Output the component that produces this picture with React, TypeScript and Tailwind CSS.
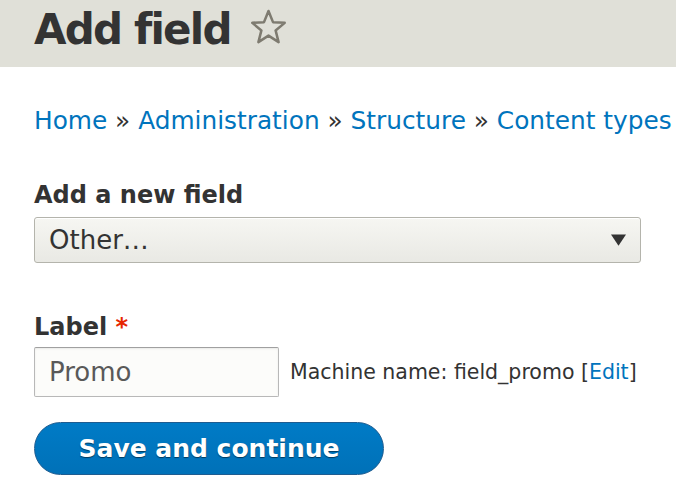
import { useState } from 'react'

const crumbs = ['Home', 'Administration', 'Structure', 'Content types']

function Star() {
  return (
    <svg viewBox="0 0 40 40" className="w-[37px] h-[36px]">
      <path
        d="M20 2.2 L25 14.6 L38 15.4 L27.9 23.8 L31.2 36.8 L20 29.6 L8.8 36.8 L12.1 23.8 L2 15.4 L15 14.6 Z"
        fill="none"
        stroke="#7e7b70"
        strokeWidth="2.8"
        strokeLinejoin="round"
      />
    </svg>
  )
}

export default function App() {
  const [label, setLabel] = useState('Promo')

  return (
    <div className="w-[676px] h-[504px] overflow-hidden bg-white text-[#333] font-['DejaVu_Sans','Verdana',sans-serif]">
      <div className="h-[67px] bg-[#e0e0d8] px-[34px] pt-[9px] flex items-start gap-[19px]">
        <h1 className="text-[42px] font-bold leading-none tracking-[-1.8px] text-[#333]">Add field</h1>
        <Star />
      </div>

      <nav className="mt-[42px] px-[34px] whitespace-nowrap text-[24.8px] leading-none">
        {crumbs.map((c, i) => (
          <span key={c}>
            {i > 0 && <span className="text-[#333]"> » </span>}
            <a className="text-[#0074bd]">{c}</a>
          </span>
        ))}
      </nav>

      <div className="px-[34px] mt-[49px]">
        <label className="block text-[24px] font-bold leading-none">Add a new field</label>
        <div className="mt-[10px] w-[607px] h-[46px] rounded-[3px] border border-[#b4b4ac] bg-gradient-to-b from-[#f6f6f2] to-[#e9e9e4] flex items-center justify-between pl-[14px] pr-[14px] shadow-[inset_0_1px_0_#fff]">
          <span className="text-[26px] leading-none text-[#333]">Other…</span>
          <svg viewBox="0 0 16 12" className="w-[15px] h-[12px]">
            <path d="M0 0 H16 L8 12 Z" fill="#333" />
          </svg>
        </div>

        <label className="block mt-[52px] text-[24px] font-bold leading-none">
          Label <span className="text-[#e62600]">*</span>
        </label>
        <div className="mt-[8px] flex items-center gap-[11px]">
          <input
            value={label}
            onChange={e => setLabel(e.target.value)}
            className="w-[245px] h-[50px] rounded-[2px] border border-[#b8b8b8] border-t-[#a0a0a0] bg-[#fcfcfa] px-[14px] text-[26px] text-[#595959] outline-none shadow-[inset_0_1px_2px_rgba(0,0,0,0.08)]"
          />
          <span className="text-[20.5px] leading-none text-[#333] whitespace-nowrap">
            Machine name: field_promo [<a className="text-[#0074bd]">Edit</a>]
          </span>
        </div>

        <button className="mt-[25px] w-[350px] h-[53px] rounded-full border border-[#1e5c90] bg-gradient-to-b from-[#007bc6] to-[#0071b8] text-white text-[25px] font-bold leading-none [text-shadow:0_1px_1px_rgba(0,0,0,0.5)]">
          Save and continue
        </button>
      </div>
    </div>
  )
}
